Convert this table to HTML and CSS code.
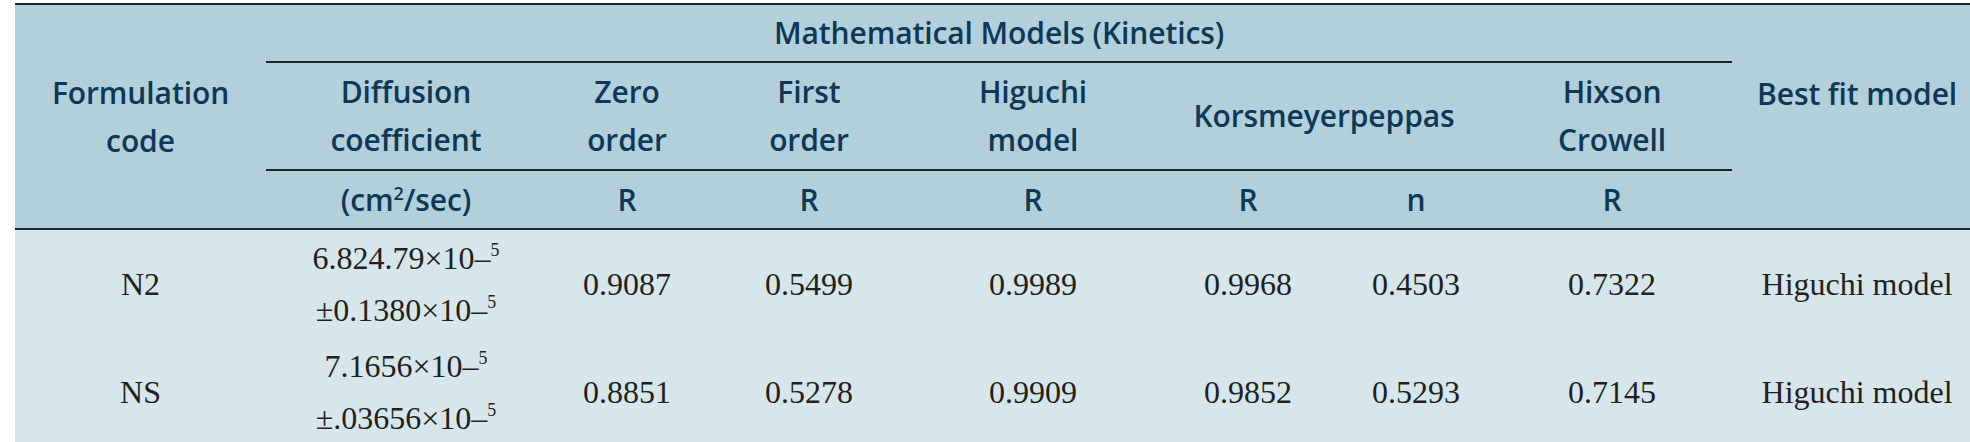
FILE: index.html
```html
<!DOCTYPE html>
<html lang="en">
<head>
  <meta charset="UTF-8" />
  <title>Mathematical Models (Kinetics)</title>
  <link rel="stylesheet" href="styles.css">
</head>
<body>
  <table class="kinetics">
    <colgroup>
      <col class="c-code">
      <col class="c-diff">
      <col class="c-zero">
      <col class="c-first">
      <col class="c-higuchi">
      <col class="c-kr">
      <col class="c-kn">
      <col class="c-hixson">
      <col class="c-best">
    </colgroup>
    <thead>
      <!-- group heading -->
      <tr>
        <th rowspan="3" class="code-head">Formulation<br>code</th>
        <th colspan="7" class="group-head">Mathematical Models (Kinetics)</th>
        <th rowspan="3" class="best-head">Best fit model</th>
      </tr>
      <!-- model names -->
      <tr class="model-row">
        <th>Diffusion<br>coefficient</th>
        <th>Zero<br>order</th>
        <th>First<br>order</th>
        <th>Higuchi<br>model</th>
        <th colspan="2">Korsmeyerpeppas</th>
        <th>Hixson<br>Crowell</th>
      </tr>
      <!-- units -->
      <tr class="unit-row">
        <th>(cm<sup>2</sup>/sec)</th>
        <th>R</th>
        <th>R</th>
        <th>R</th>
        <th>R</th>
        <th>n</th>
        <th>R</th>
      </tr>
    </thead>
    <tbody>
      <tr>
        <td>N2</td>
        <td class="diff">6.824.79×10–<sup>5</sup><br>±0.1380×10–<sup>5</sup></td>
        <td>0.9087</td>
        <td>0.5499</td>
        <td>0.9989</td>
        <td>0.9968</td>
        <td>0.4503</td>
        <td>0.7322</td>
        <td>Higuchi model</td>
      </tr>
      <tr>
        <td>NS</td>
        <td class="diff">7.1656×10–<sup>5</sup><br>±.03656×10–<sup>5</sup></td>
        <td>0.8851</td>
        <td>0.5278</td>
        <td>0.9909</td>
        <td>0.9852</td>
        <td>0.5293</td>
        <td>0.7145</td>
        <td>Higuchi model</td>
      </tr>
    </tbody>
  </table>
</body>
</html>
```

FILE: styles.css
```css
/* Basic reset */
* { margin: 0; padding: 0; box-sizing: border-box; }

html, body {
  width: 100%;
  height: 100%;
  background: #ffffff;
  overflow: hidden;
}

body {
  padding: 3px 0 0 15px;
}

/* Table shell */
.kinetics {
  width: 1967px;
  table-layout: fixed;
  border-collapse: separate;
  border-spacing: 0;
  border-top: 2px solid #1b262c;
}

.c-code    { width: 251px; }
.c-diff    { width: 280px; }
.c-zero    { width: 162px; }
.c-first   { width: 202px; }
.c-higuchi { width: 246px; }
.c-kr      { width: 184px; }
.c-kn      { width: 152px; }
.c-hixson  { width: 240px; }
.c-best    { width: 250px; }

/* Header */
.kinetics th {
  background: #b3cfd9;
  color: #0d3857;
  font-family: "Open Sans", "Noto Sans", sans-serif;
  font-weight: 600;
  font-size: 30px;
  letter-spacing: -0.1px;
  line-height: 48px;
  text-align: center;
  vertical-align: middle;
  padding: 0;
}

.kinetics .group-head {
  height: 58px;
  border-bottom: 2px solid #1b262c;
}

.kinetics .model-row th {
  height: 108px;
  border-bottom: 2px solid #1b262c;
}

.kinetics .unit-row th,
.kinetics .code-head,
.kinetics .best-head {
  border-bottom: 2px solid #1b262c;
}

.kinetics .unit-row th {
  height: 59px;
}

/* sits level with the first line of the model names */
.kinetics .best-head {
  padding-bottom: 46px;
}

.kinetics th sup {
  font-size: 60%;
  line-height: 0;
}

/* Body rows */
.kinetics td {
  height: 108px;
  background: #d6e6eb;
  color: #231f20;
  font-family: "Liberation Serif", "Times New Roman", serif;
  font-size: 32px;
  line-height: 52px;
  text-align: center;
  vertical-align: middle;
  padding: 0;
}

.kinetics td sup {
  font-size: 56%;
  line-height: 0;
  vertical-align: 0.75em;
}
```
